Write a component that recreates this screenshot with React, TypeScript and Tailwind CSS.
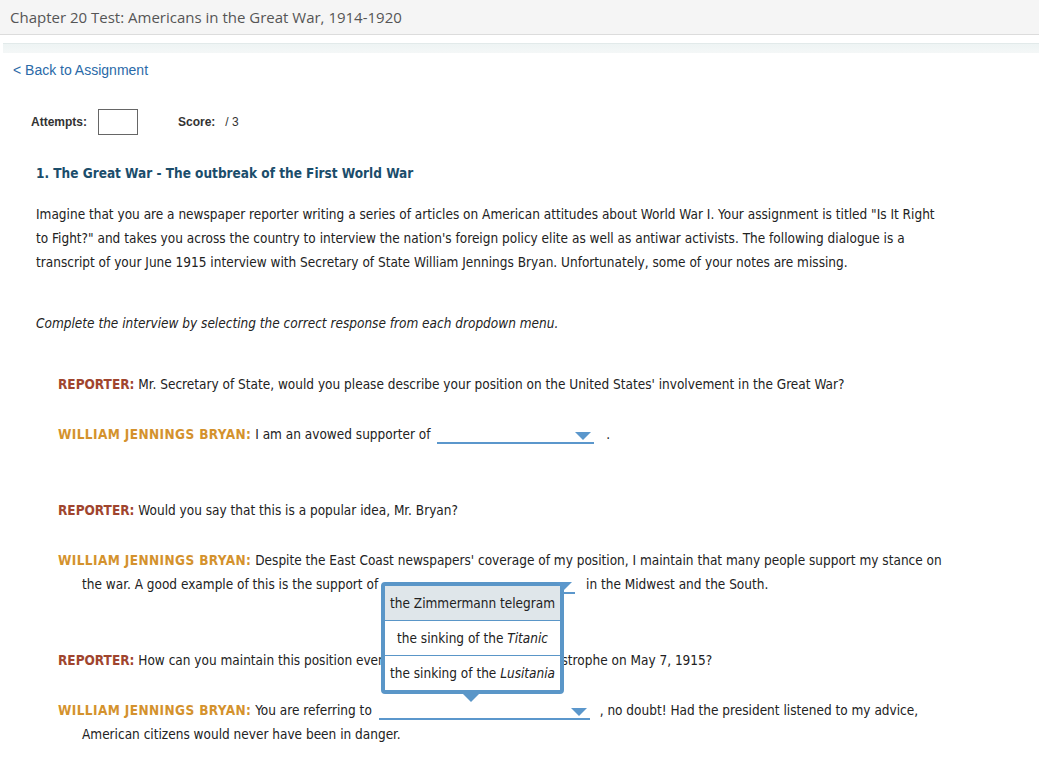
import React from "react";

const body = "font-['DejaVu_Sans_Condensed','DejaVu_Sans',sans-serif] font-stretch-condensed";

function Arrow() {
  return (
    <svg width="16" height="8" viewBox="0 0 16 8" className="absolute right-[3px] top-[5px] z-20">
      <path d="M0 0 L16 0 L8 8 Z" fill="#5b97cc" />
    </svg>
  );
}

function Dropdown({ w, children }: { w: string; children?: React.ReactNode }) {
  return (
    <span className={`relative inline-block ${w} h-[17px] border-b-2 border-[#5b97cc] align-[-5px]`}>
      {children}
      <Arrow />
    </span>
  );
}

function Popover() {
  return (
    <div className="absolute left-[-1px] top-[5px] z-10 w-[183px] rounded-[4px] border-4 border-[#5a96c8] bg-white text-center text-[13.5px] leading-[34px] text-[#222] indent-0">
      <div className="bg-[#dfe6ea] border-b border-[#5a96c8]">the Zimmermann telegram</div>
      <div className="border-b border-[#5a96c8]">
        the sinking of the <i>Titanic</i>
      </div>
      <div>
        the sinking of the <i>Lusitania</i>
      </div>
      <svg width="16" height="8" viewBox="0 0 16 8" className="absolute left-[78px] bottom-[-12px]">
        <path d="M0 0 L16 0 L8 8 Z" fill="#5a96c8" />
      </svg>
    </div>
  );
}

const Rep = () => <b className="text-[#a0452e]">REPORTER:</b>;
const Bry = () => <b className="tracking-[0.4px] text-[#d4922d]">WILLIAM JENNINGS BRYAN:</b>;

export default function App() {
  return (
    <div className="min-h-[769px] bg-white">
      <header className="flex h-[35px] items-center border-b border-[#dcdcdc] bg-[#f5f5f5] pl-[10px] font-['Open_Sans',sans-serif] text-[15px] text-[#555]">
        Chapter 20 Test: Americans in the Great War, 1914-1920
      </header>
      <div className="ml-[3px] mt-[8px] h-[10px] border-t border-[#e2eaea] bg-gradient-to-b from-[#eef4f4] to-[#f4f7f7]" />
      <div className="mt-[9px] pl-[13px] font-['Liberation_Sans',Arial,sans-serif] text-[14px] leading-[16px] text-[#2a6aa8]">
        &lt; Back to Assignment
      </div>
      <div className="mt-[31px] flex items-center pl-[31px] font-['Liberation_Sans',Arial,sans-serif] text-[12px] text-[#333]">
        <b>Attempts:</b>
        <span className="ml-[11px] inline-block h-[26px] w-[40px] border border-[#666]" />
        <b className="ml-[40px]">Score:</b>
        <span className="ml-[10px]">/ 3</span>
      </div>

      <div className={`${body} pl-[36px] pr-[10px] text-[13.5px] leading-[24px] text-[#222]`}>
        <h1 className="mt-[26px] font-bold text-[#1b4d6b]">1. The Great War - The outbreak of the First World War</h1>
        <p className="mt-[17px]">
          Imagine that you are a newspaper reporter writing a series of articles on American attitudes about World War I. Your assignment is titled "Is It Right
          <br />
          to Fight?" and takes you across the country to interview the nation's foreign policy elite as well as antiwar activists. The following dialogue is a
          <br />
          transcript of your June 1915 interview with Secretary of State William Jennings Bryan. Unfortunately, some of your notes are missing.
        </p>
        <p className="mt-[37px] italic">Complete the interview by selecting the correct response from each dropdown menu.</p>

        <div className="pl-[22px]">
          <p className="mt-[37px] pl-[24px] -indent-[24px]">
            <Rep /> Mr. Secretary of State, would you please describe your position on the United States' involvement in the Great War?
          </p>
          <p className="mt-[26px] pl-[24px] -indent-[24px]">
            <Bry /> I am an avowed supporter of <span className="ml-[3px]" /><Dropdown w="w-[157px]" />
            <span className="ml-[12px]">.</span>
          </p>
          <p className="mt-[52px] pl-[24px] -indent-[24px]">
            <Rep /> Would you say that this is a popular idea, Mr. Bryan?
          </p>
          <p className="mt-[26px] pl-[24px] -indent-[24px]">
            <Bry /> Despite the East Coast newspapers' coverage of my position, I maintain that many people support my stance on
            <br />
            the war. A good example of this is the support of{" "}
            <Dropdown w="w-[193px]">
              <Popover />
            </Dropdown>
            <span className="ml-[11px]">in the Midwest and the South.</span>
          </p>
          <p className="mt-[52px] pl-[24px] -indent-[24px]">
            <Rep /> How can you maintain this position even after the RMS <i>Lusitania</i> catastrophe on May 7, 1915?
          </p>
          <p className="mt-[26px] pl-[24px] -indent-[24px]">
            <Bry /> You are referring to <span className="ml-[3px]" />
            <Dropdown w="w-[211px]" />
            <span className="ml-[10px]">, no doubt! Had the president listened to my advice,</span>
            <br />
            American citizens would never have been in danger.
          </p>
        </div>
      </div>
    </div>
  );
}
